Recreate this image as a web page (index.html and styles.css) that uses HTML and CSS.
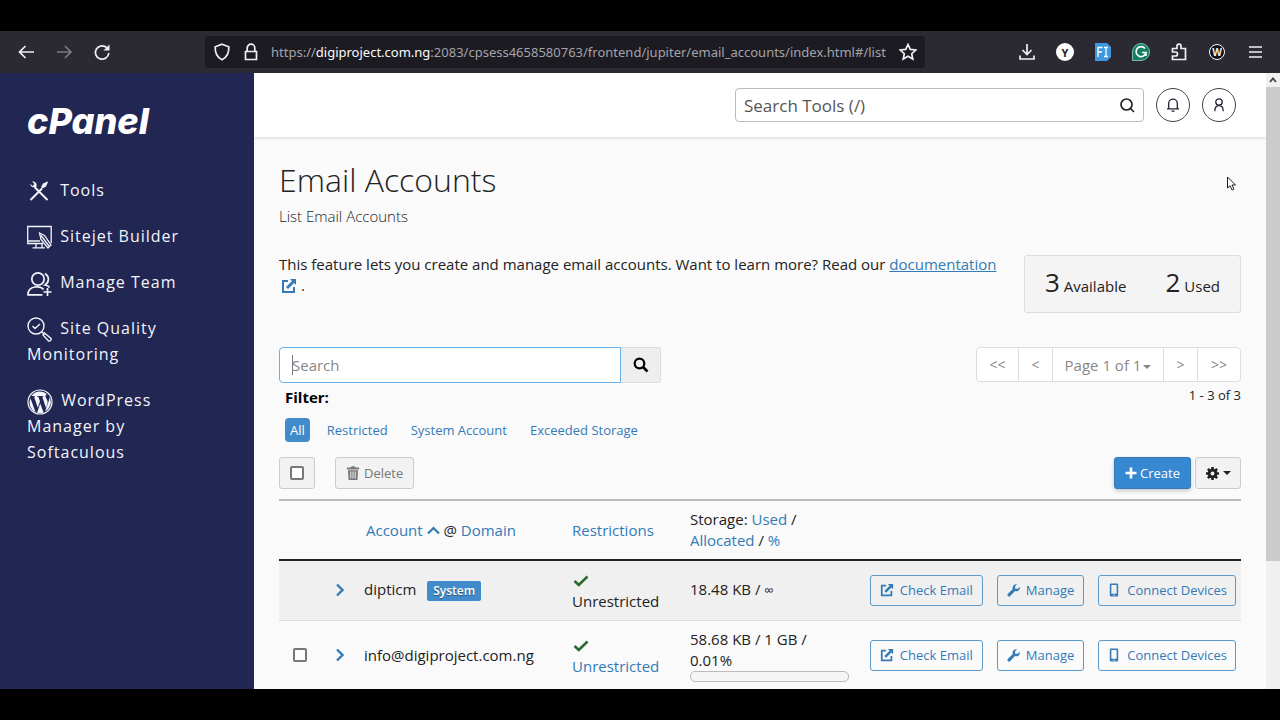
FILE: index.html
```html
<!DOCTYPE html>
<html lang="en">
<head>
    <meta charset="UTF-8">
    <meta name="viewport" content="width=device-width, initial-scale=1.0">
    <title>cPanel - Email Accounts</title>
    <link rel="stylesheet" href="styles.css">
</head>
<body>
    <!-- Shared icons -->
    <svg class="sprite" aria-hidden="true">
        <symbol id="i-external" viewBox="0 0 16 16">
            <path d="M7 3H2v11h11V9" fill="none" stroke="currentColor" stroke-width="2"/>
            <path d="M9 1h6v6l-2-2-6 6-2-2 6-6z" fill="currentColor"/>
        </symbol>
        <symbol id="i-wrench" viewBox="0 0 16 16">
            <path d="M15.7 3.7a4.4 4.4 0 0 1-5.9 5L4 14.9a1.7 1.7 0 0 1-2.8-2.8l6-5.8a4.4 4.4 0 0 1 5.1-5.9L10 2.8v3.1h3.1z" fill="currentColor"/>
        </symbol>
        <symbol id="i-phone" viewBox="0 0 16 16">
            <path d="M4.500.5h7a1.3 1.3 0 0 1 1.3 1.3v12.400a1.3 1.3 0 0 1-1.3 1.3h-7a1.3 1.3 0 0 1-1.3-1.3V1.800A1.3 1.3 0 0 1 4.500.5zM5 2.300v9.900h6V2.300zM7.200 13.300v1.200h1.600v-1.200z" fill="currentColor" fill-rule="evenodd"/>
        </symbol>
        <symbol id="i-check" viewBox="0 0 16 16">
            <path d="M1.5 8l4.3 4L14.5 3.5" fill="none" stroke="currentColor" stroke-width="2.6"/>
        </symbol>
        <symbol id="i-right" viewBox="0 0 16 16">
            <path d="M5 2.5L10.5 8 5 13.5" fill="none" stroke="currentColor" stroke-width="2.4"/>
        </symbol>
    </svg>

    <header class="browser-bar">
        <div class="nav-buttons">
            <button class="bar-btn" aria-label="Back">
                <svg width="20" height="20" viewBox="0 0 20 20"><path d="M18 10H4M9.5 4l-6 6 6 6" class="line"/></svg>
            </button>
            <button class="bar-btn dim" aria-label="Forward">
                <svg width="20" height="20" viewBox="0 0 20 20"><path d="M3 10h14M11 4l6 6-6 6" class="line"/></svg>
            </button>
            <button class="bar-btn" aria-label="Reload">
                <svg width="20" height="20" viewBox="0 0 20 20"><path d="M16.8 11A6.700 6.700 0 1 1 14.800 5.700" class="line"/><path d="M17.500 2.500v6h-6z" fill="currentColor"/></svg>
            </button>
        </div>
        <div class="url-bar">
            <svg width="18" height="18" viewBox="0 0 18 18"><path d="M9 1.200l6.800 2.600c.3 6-1.600 10.500-6.800 13C3.800 14.300 1.900 9.800 2.200 3.800z" class="line"/></svg>
            <svg width="18" height="18" viewBox="0 0 18 18"><path d="M5.200 8V5a3.800 3.800 0 0 1 7.600 0v3M3.500 8.500h11v8h-11z" class="line"/></svg>
            <div class="url">https://<span class="host">digiproject.com.ng</span>:2083/cpsess4658580763/frontend/jupiter/email_accounts/index.html#/list</div>
            <svg width="18" height="18" viewBox="0 0 18 18"><path d="M9 1.500l2.300 4.900 5.400.6-4 3.700 1.100 5.300L9 13.300 4.200 16l1.100-5.300-4-3.700 5.400-.6z" class="line"/></svg>
        </div>
        <div class="extensions">
            <button class="bar-btn" aria-label="Downloads">
                <svg width="18" height="18" viewBox="0 0 18 18"><path d="M9 1v10M4.500 7L9 11.500 13.500 7M2 12.500V16h14v-3.500" class="line"/></svg>
            </button>
            <button class="bar-btn badge-y" aria-label="Y extension">Y</button>
            <button class="bar-btn badge-fi" aria-label="FI extension">
                <svg width="18" height="18" viewBox="0 0 18 18"><path d="M1 0h12l4 4v10l-4 4H1z" fill="#3f97de"/><path d="M4 14V4.500h4.500M4 9h4M10 4.500h4M12 4.500v9M10 13.500h4" fill="none" stroke="#fff" stroke-width="1.300"/></svg>
            </button>
            <button class="bar-btn" aria-label="Grammarly">
                <svg width="18" height="18" viewBox="0 0 18 18"><path d="M9 .5A8.500 8.500 0 1 1 9 17.500H.5V9A8.500 8.500 0 0 1 9 .5z" fill="#12805f" stroke="#9fd3c2" stroke-width=".8"/><path d="M13 5.500A5 5 0 1 0 14 9.500h-4M14 9.500V13" fill="none" stroke="#fff" stroke-width="1.600"/></svg>
            </button>
            <button class="bar-btn" aria-label="Extensions">
                <svg width="18" height="18" viewBox="0 0 18 18"><path d="M2.500 9V5.500H7V3.200a2 2 0 0 1 4 0v2.300h4.500v11h-13V13h3a2 2 0 0 0 0-4z" class="line"/></svg>
            </button>
            <button class="bar-btn badge-w" aria-label="W extension">W</button>
            <button class="bar-btn" aria-label="Menu">
                <svg width="18" height="18" viewBox="0 0 18 18"><path d="M3 4h13M3 9h13M3 14h13" fill="none" stroke="currentColor" stroke-width="1.300"/></svg>
            </button>
        </div>
    </header>

    <div class="app">
        <aside class="sidebar">
            <a class="logo" href="#">cPanel</a>
            <nav>
                <a class="nav-item" href="#">
                    <svg width="25" height="25" viewBox="0 0 25 25"><path d="M7.500 8L20.500 21M3.500 21L15 9.500" fill="none" stroke="currentColor" stroke-width="2"/><path d="M3 4.500L5.500 7 7.500 5 5 2.500a4 4 0 0 1 4.500 5.200A4.300 4.300 0 0 1 3 4.500zM14 8l2-3.500 4.500-2 .5.500-2 4.500-3.500 2z" fill="currentColor"/></svg>
                    Tools</a>
                <a class="nav-item" href="#">
                    <svg width="25" height="25" viewBox="0 0 25 25"><path d="M16 18.500H.7V1.500h23.500V18M.7 16H13M9 18.500v4M15 18.500v4M5.500 22.800H18" fill="none" stroke="currentColor" stroke-width="1.300"/><path d="M12.500 8l5 2.500 6.500 9.500-3 3-7-8.500zM14 10.500l8 10.500" fill="none" stroke="currentColor" stroke-width="1.300"/></svg>
                    Sitejet Builder</a>
                <a class="nav-item" href="#">
                    <svg width="25" height="25" viewBox="0 0 25 25"><circle cx="11" cy="8" r="6.200" class="line"/><path d="M18 2.500c5 3.500 4 9 0 11.500 2 .4 3.500 1 4.500 2.500M15.500 23.800H1c0-10 13-9 15.500-5.300M20.500 17v8M16.500 21h8" class="line"/></svg>
                    Manage Team</a>
                <a class="nav-item" href="#">
                    <svg width="25" height="25" viewBox="0 0 25 25"><circle cx="9" cy="9" r="8" fill="none" stroke="currentColor" stroke-width="1.400"/><path d="M5.500 9l2.500 2.500L13 7M14.500 14.500l3 3M17.500 16l6.500 5.500a2 2 0 0 1-2.500 2.500L16 18z" fill="none" stroke="currentColor" stroke-width="1.400"/></svg>
                    Site Quality Monitoring</a>
                <a class="nav-item" href="#">
                    <svg width="26" height="26" viewBox="0 0 26 26"><circle cx="13" cy="13" r="12" fill="none" stroke="currentColor" stroke-width="1.200"/><path d="M3.500 9.500l5.200 14A10.700 10.700 0 0 1 3.500 9.500zM4.500 7a10.500 10.500 0 0 1 15.600-1.800c-2 .4-2 2.500-.8 4.200 1.700 2.500 1.500 4.300.7 6.600l-1 3-3.700-11.200 1.300-.2V7H10v.6l1.400.2 1.600 4.400-2.200 6.600L7 7.800l1.300-.2V7zM13.200 14.500l3.400 9.100a10.500 10.500 0 0 1-6.500.1zM22.500 8a10.500 10.500 0 0 1-4.300 14.300l3.200-9.300c.8-2.300 1-3.700 1.100-5z" fill="currentColor"/></svg>
                    WordPress Manager by Softaculous</a>
            </nav>
        </aside>

        <div class="main">
            <div class="topbar">
                <div class="tool-search">
                    <input type="text" aria-label="Search Tools" placeholder="Search Tools (/)">
                    <svg width="18" height="18" viewBox="0 0 18 18"><circle cx="8.500" cy="8.500" r="5.500" class="line"/><path d="M12.500 12.500l3.500 3.500" class="line"/></svg>
                </div>
                <button class="round-btn" aria-label="Notifications">
                    <svg width="16" height="16" viewBox="0 0 16 16"><path d="M3.700 11.500V6.500a4.300 4.300 0 0 1 8.600 0v5M2 11.800h12M6.500 14.200h3" fill="none" stroke="currentColor" stroke-width="1.300"/></svg>
                </button>
                <button class="round-btn" aria-label="User menu">
                    <svg width="16" height="16" viewBox="0 0 16 16"><circle cx="8" cy="5" r="3.200" fill="none" stroke="currentColor" stroke-width="1.300"/><path d="M3.800 14.200c0-3.500 1.500-5.500 4.200-5.500s4.200 2 4.200 5.500" fill="none" stroke="currentColor" stroke-width="1.300"/></svg>
                </button>
            </div>

            <main class="content">
                <h1>Email Accounts</h1>
                <h2>List Email Accounts</h2>

                <div class="intro">
                    <p>This feature lets you create and manage email accounts. Want to learn more? Read our <a class="doc-link" href="#">documentation</a> <a href="#" aria-label="Open documentation"><svg class="doc-icon" width="16" height="16"><use href="#i-external"/></svg></a> .</p>
                    <div class="stats">
                        <div><span class="count">3</span> Available</div>
                        <div><span class="count">2</span> Used</div>
                    </div>
                </div>

                <div class="list-tools">
                    <div class="search">
                        <input type="text" aria-label="Search" placeholder="Search">
                        <span class="caret-line"></span>
                        <button aria-label="Go">
                            <svg width="16" height="16" viewBox="0 0 16 16"><circle cx="6.500" cy="6.500" r="4.800" fill="none" stroke="currentColor" stroke-width="2.200"/><path d="M10 10l4.500 4.500" fill="none" stroke="currentColor" stroke-width="2.600"/></svg>
                        </button>
                    </div>
                    <div class="paging">
                        <div class="pager">
                            <button>&lt;&lt;</button>
                            <button class="step">&lt;</button>
                            <button class="page">Page 1 of 1<span class="caret"></span></button>
                            <button class="step">&gt;</button>
                            <button>&gt;&gt;</button>
                        </div>
                        <div class="range">1 - 3 of 3</div>
                    </div>
                </div>

                <div class="filter">
                    <strong>Filter:</strong>
                    <div class="filter-links">
                        <a class="active" href="#">All</a>
                        <a href="#">Restricted</a>
                        <a href="#">System Account</a>
                        <a href="#">Exceeded Storage</a>
                    </div>
                </div>

                <div class="actions-bar">
                    <label class="btn select-all"><input type="checkbox" aria-label="Select all"></label>
                    <button class="btn delete">
                        <svg width="14" height="14" viewBox="0 0 14 14"><path d="M1 1.500h3.800L5.500.3h3l.7 1.200H13V3.500H1zM2 4.300h10L11.500 14h-9zM4.300 5.500v7h1v-7zm2.200 0v7h1v-7zm2.200 0v7h1v-7z" fill="currentColor" fill-rule="evenodd"/></svg>
                        Delete
                    </button>
                    <div class="right">
                        <button class="btn create">
                            <svg width="12" height="12" viewBox="0 0 12 12"><path d="M6 .5v11M.5 6h11" stroke="currentColor" stroke-width="2.600"/></svg>
                            Create
                        </button>
                        <button class="btn settings" aria-label="Settings">
                            <svg width="13" height="13" viewBox="0 0 16 16"><circle cx="8" cy="8" r="4.200" fill="none" stroke="currentColor" stroke-width="3.600"/><path d="M8 0v3M8 13v3M0 8h3M13 8h3M2.300 2.300l2.200 2.200M11.500 11.500l2.200 2.200M2.300 13.700l2.200-2.200M11.500 4.500l2.200-2.200" stroke="currentColor" stroke-width="3.200"/></svg>
                            <span class="caret"></span>
                        </button>
                    </div>
                </div>

                <table class="accounts">
                    <colgroup>
                        <col class="c-check"><col class="c-expand"><col class="c-account"><col class="c-restrict"><col class="c-storage"><col>
                    </colgroup>
                    <thead>
                        <tr>
                            <th></th>
                            <th></th>
                            <th><a href="#">Account <svg width="13" height="13" viewBox="0 0 13 13"><path d="M1 10.500L6.500 5 12 10.500" fill="none" stroke="currentColor" stroke-width="2.200"/></svg></a> @ <a href="#">Domain</a></th>
                            <th><a href="#">Restrictions</a></th>
                            <th>Storage: <a href="#">Used</a> /<br><a href="#">Allocated</a> / <a href="#">%</a></th>
                            <th></th>
                        </tr>
                    </thead>
                    <tbody>
                        <tr class="odd">
                            <td></td>
                            <td><a href="#" aria-label="Expand"><svg width="16" height="16"><use href="#i-right"/></svg></a></td>
                            <td>dipticm <span class="tag">System</span></td>
                            <td><svg class="ok" width="16" height="16"><use href="#i-check"/></svg>Unrestricted</td>
                            <td>18.48 KB / <span class="inf">∞</span></td>
                            <td>
                                <div class="row-actions">
                                    <button><svg width="14" height="14"><use href="#i-external"/></svg>Check Email</button>
                                    <button><svg width="13" height="13"><use href="#i-wrench"/></svg>Manage</button>
                                    <button class="devices"><svg width="14" height="14"><use href="#i-phone"/></svg>Connect Devices</button>
                                </div>
                            </td>
                        </tr>
                        <tr>
                            <td><input type="checkbox" aria-label="Select info@digiproject.com.ng"></td>
                            <td><a href="#" aria-label="Expand"><svg width="16" height="16"><use href="#i-right"/></svg></a></td>
                            <td>info@digiproject.com.ng</td>
                            <td><svg class="ok" width="16" height="16"><use href="#i-check"/></svg><a href="#">Unrestricted</a></td>
                            <td>58.68 KB / 1 GB / 0.01%<div class="usage"></div></td>
                            <td>
                                <div class="row-actions">
                                    <button><svg width="14" height="14"><use href="#i-external"/></svg>Check Email</button>
                                    <button><svg width="13" height="13"><use href="#i-wrench"/></svg>Manage</button>
                                    <button class="devices"><svg width="14" height="14"><use href="#i-phone"/></svg>Connect Devices</button>
                                </div>
                            </td>
                        </tr>
                    </tbody>
                </table>
            </main>
        </div>

        <div class="scrollbar">
            <svg width="14" height="14" viewBox="0 0 14 14"><path d="M4 9l3-3.500L10 9" fill="none" stroke="#444" stroke-width="1.800"/></svg>
            <div class="thumb"></div>
        </div>
    </div>

    <svg class="pointer" width="12" height="16" viewBox="0 0 12 16"><path d="M1.500 1v11l2.600-2.300 2 4.300 1.800-.8-1.900-4.200h3.500z" fill="#fff" stroke="#222" stroke-width="1"/></svg>
</body>
</html>
```
FILE: styles.css
```css
* {
    box-sizing: border-box;
}
body {
    margin: 0;
    height: 100vh;
    padding: 31px 0;
    display: flex;
    flex-direction: column;
    background: #000;
    color: #222;
    font-family: "Open Sans", "Noto Sans", sans-serif;
    font-size: 15px;
    line-height: 21px;
    overflow: hidden;
}
a {
    color: #337ab7;
    text-decoration: none;
}
button, input {
    font-family: inherit;
}
button {
    cursor: pointer;
}
svg {
    flex: none;
}
.sprite {
    position: absolute;
    width: 0;
    height: 0;
}
.line {
    fill: none;
    stroke: currentColor;
    stroke-width: 1.7;
}

/* Browser bar */
.browser-bar {
    display: flex;
    align-items: center;
    flex: none;
    height: 42px;
    padding: 0 15px 0 16px;
    background: #2b2a33;
    color: #f0f0f4;
}
.nav-buttons {
    display: flex;
    gap: 18px;
    width: 189px;
}
.bar-btn {
    display: flex;
    align-items: center;
    justify-content: center;
    width: 20px;
    height: 20px;
    padding: 0;
    border: none;
    background: none;
    color: inherit;
}
.dim {
    color: #7c7b83;
}
.url-bar {
    display: flex;
    align-items: center;
    gap: 11px;
    width: 720px;
    height: 32px;
    padding: 0 8px;
    border-radius: 4px;
    background: #1c1b22;
}
.url {
    flex: 1;
    min-width: 0;
    color: #a3a3aa;
    font-family: "Noto Sans", sans-serif;
    font-size: 13px;
    white-space: nowrap;
}
.host {
    color: #fbfbfe;
}
.extensions {
    display: flex;
    gap: 18px;
    margin-left: auto;
}
.badge-y, .badge-w {
    width: 18px;
    height: 18px;
    margin: 1px;
    border-radius: 50%;
    font-size: 11px;
    font-weight: 700;
}
.badge-y {
    background: #fff;
    color: #222;
}
.badge-w {
    width: 16px;
    height: 16px;
    margin: 2px;
    border: 1px solid #fff;
    background: #111;
    font-size: 10px;
}

/* Layout */
.app {
    display: flex;
    flex: 1;
    min-height: 0;
    background: #fafafa;
}
.sidebar {
    flex: none;
    width: 254px;
    padding: 26px 60px 0 27px;
    background: #212653;
    color: #fff;
}
.logo {
    display: block;
    margin-bottom: 24px;
    color: #fff;
    font-family: Inter, sans-serif;
    font-size: 36px;
    font-style: italic;
    font-weight: 800;
    line-height: 44px;
}
.nav-item {
    display: block;
    padding: 10px 0;
    color: #f4f4fa;
    font-size: 16px;
    letter-spacing: 1px;
    line-height: 26px;
}
.nav-item svg {
    margin: -2px 3px -2px 0;
    vertical-align: middle;
}
.main {
    flex: 1;
    min-width: 0;
    overflow: hidden;
}
.topbar {
    display: flex;
    align-items: center;
    justify-content: flex-end;
    gap: 12px;
    height: 64px;
    padding-right: 30px;
    background: #fff;
    box-shadow: 0 1px 3px rgba(0,0,0,0.15);
}
.tool-search {
    display: flex;
    align-items: center;
    width: 409px;
    height: 34px;
    padding: 0 7px 0 8px;
    border: 1px solid #bbb;
    border-radius: 4px;
}
.tool-search input {
    flex: 1;
    min-width: 0;
    padding: 0;
    border: none;
    outline: none;
    background: none;
    font-size: 17px;
}
.tool-search input::placeholder {
    color: #555;
}
.round-btn {
    display: flex;
    align-items: center;
    justify-content: center;
    width: 34px;
    height: 34px;
    padding: 0;
    border: 1px solid #444;
    border-radius: 50%;
    background: #fff;
    color: #223;
}
.scrollbar {
    flex: none;
    width: 14px;
    background: #f0f0f0;
}
.scrollbar svg {
    display: block;
}
.thumb {
    height: 77%;
    background: #cbcbcb;
}

/* Page content */
.content {
    padding: 23px 25px 0;
}
h1 {
    margin: 0 0 6px;
    font-size: 32px;
    font-weight: 300;
    line-height: 40px;
}
h2 {
    margin: 0 0 27px;
    font-size: 15px;
    font-weight: 300;
    line-height: 21px;
}
.intro {
    display: flex;
    justify-content: space-between;
    gap: 20px;
    margin-bottom: 34px;
}
.intro p {
    margin: 0;
}
.doc-link {
    text-decoration: underline;
}
.doc-icon {
    margin-left: 2px;
    vertical-align: -3px;
}
.stats {
    display: flex;
    align-items: center;
    justify-content: space-between;
    flex: none;
    width: 217px;
    height: 58px;
    margin-top: 1px;
    padding: 0 20px;
    border: 1px solid #ddd;
    border-radius: 3px;
    background: #f4f4f4;
}
.count {
    font-size: 26px;
}
.list-tools {
    display: flex;
    justify-content: space-between;
    align-items: flex-start;
    height: 41px;
}
.search {
    position: relative;
    display: flex;
    width: 382px;
}
.search input {
    flex: 1;
    min-width: 0;
    height: 36px;
    padding: 0 12px;
    border: 1px solid #66afe9;
    border-radius: 4px 0 0 4px;
    background: #fff;
    font-size: 15px;
}
.search input::placeholder {
    color: #888;
}
.search button {
    width: 40px;
    padding: 4px 0 0;
    border: 1px solid #ddd;
    border-left: none;
    border-radius: 0 3px 3px 0;
    background: #eee;
}
/* text cursor in the focused box */
.caret-line {
    position: absolute;
    left: 13px;
    top: 8px;
    width: 1px;
    height: 20px;
    background: #777;
}
.pager {
    display: flex;
    height: 35px;
    border: 1px solid #ddd;
    border-radius: 4px;
    background: #fff;
}
.pager button {
    width: 42px;
    padding: 0;
    border: none;
    border-right: 1px solid #ddd;
    background: none;
    color: #888;
    font-size: 14px;
}
.pager button:last-child {
    border-right: none;
}
.pager .step {
    width: 34px;
}
.pager .page {
    width: 111px;
    font-size: 15px;
}
.caret {
    display: inline-block;
    margin-left: 2px;
    border: 4px solid transparent;
    border-top-color: currentColor;
    border-bottom: none;
    vertical-align: 2px;
}
.range {
    margin-top: 3px;
    font-size: 13px;
    text-align: right;
}
.filter {
    margin: -1px 0 15px;
    padding-left: 6px;
}
.filter strong {
    display: block;
    margin-bottom: 10px;
    color: #000;
}
.filter-links {
    display: flex;
    gap: 11px;
}
.filter-links a {
    padding: 0 6px;
    border-radius: 4px;
    font-size: 13px;
    line-height: 24px;
}
.filter-links .active {
    padding: 0 5px;
    background: #428bca;
    color: #fff;
}
.actions-bar {
    display: flex;
    align-items: center;
    gap: 20px;
    margin-bottom: 10px;
}
.btn {
    display: flex;
    align-items: center;
    justify-content: center;
    height: 32px;
    padding: 0 10px;
    border: 1px solid #ccc;
    border-radius: 3px;
    background: #f2f2f2;
    font-size: 13px;
}
input[type="checkbox"] {
    appearance: none;
    display: block;
    width: 14px;
    height: 14px;
    margin: 0;
    border: 2px solid #777;
    border-radius: 2px;
    background: #fff;
}
.delete {
    gap: 4px;
    color: #777;
}
.right {
    display: flex;
    gap: 4px;
    margin-left: auto;
}
.create {
    gap: 3px;
    border-color: #337ab7;
    background: #3688d2;
    color: #fff;
    box-shadow: 0 2px 4px rgba(0,0,0,0.2);
}
.settings {
    gap: 2px;
    width: 46px;
    padding: 0;
    color: #222;
}

/* Accounts table */
.accounts {
    width: 100%;
    border-collapse: collapse;
    border-top: 2px solid #bbb;
    table-layout: fixed;
}
.c-check {
    width: 50px;
}
.c-expand {
    width: 30px;
}
.c-account {
    width: 208px;
}
.c-restrict {
    width: 118px;
}
.c-storage {
    width: 169px;
}
.accounts th, .accounts td {
    padding: 8px 5px;
    text-align: left;
    font-weight: 400;
}
.accounts th {
    height: 60px;
    border-bottom: 2px solid #222;
}
.accounts th:nth-child(3) {
    padding-left: 7px;
}
.accounts td {
    height: 60px;
    border-bottom: 1px solid #ddd;
}
.accounts .odd {
    background: #f0f0f0;
}
.accounts td:first-child {
    padding-left: 14px;
}
.accounts td:nth-child(2) {
    padding: 0 3px;
}
.accounts td:nth-child(2) svg {
    display: block;
}
.accounts td:nth-child(4) {
    padding: 10px 5px 6px;
}
.ok {
    display: block;
    margin: 0 0 2px 1px;
    color: #2a6a2e;
}
.tag {
    display: inline-block;
    margin-left: 7px;
    padding: 0 6px;
    border-radius: 2px;
    background: #428bca;
    color: #fff;
    font-size: 12px;
    font-weight: 600;
    line-height: 20px;
    text-shadow: 0 1px 1px rgba(0,0,0,0.4);
}
.inf {
    font-size: 13px;
}
.usage {
    height: 11px;
    border: 1px solid #bbb;
    border-radius: 5px;
    background: #f5f5f5;
}
.row-actions {
    display: flex;
    justify-content: flex-end;
    gap: 14px;
}
.row-actions button {
    display: flex;
    align-items: center;
    gap: 6px;
    height: 31px;
    padding: 0 9px;
    border: 1px solid #5b9bc9;
    border-radius: 3px;
    background: none;
    color: #337ab7;
    font-size: 13px;
    white-space: nowrap;
}
.row-actions .devices {
    padding: 0 8px;
}

/* Mouse pointer */
.pointer {
    position: absolute;
    left: 1226px;
    top: 176px;
}
```
